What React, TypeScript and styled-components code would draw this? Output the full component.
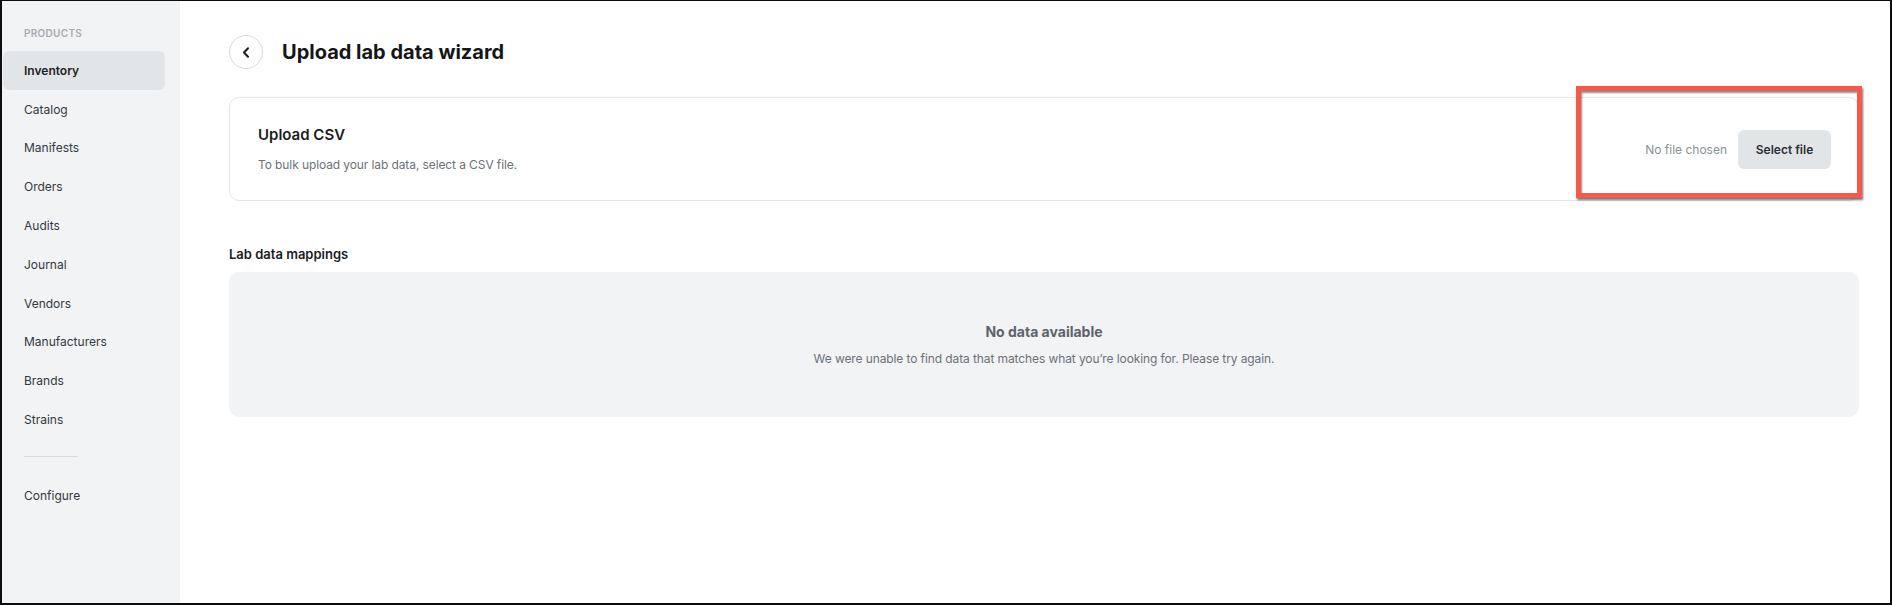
import React from "react";
import styled, { createGlobalStyle } from "styled-components";

const GlobalStyle = createGlobalStyle`
  * { box-sizing: border-box; }
  html, body { margin: 0; padding: 0; background: #ffffff; }
  body {
    font-family: Inter, "Noto Sans", "Liberation Sans", sans-serif;
    -webkit-font-smoothing: antialiased;
  }
`;

const Frame = styled.div`
  position: relative;
  display: flex;
  width: 1892px;
  height: 605px;
  border-style: solid;
  border-color: #0c0c0c;
  border-width: 1px 2px 2px 2px;
  overflow: hidden;
  background: #ffffff;
`;

const Sidebar = styled.nav`
  width: 178px;
  flex-shrink: 0;
  background: #f2f3f5;
  padding-top: 25px;
  display: flex;
  flex-direction: column;
`;

const SectionLabel = styled.div`
  font-size: 10px;
  line-height: 14px;
  font-weight: 600;
  letter-spacing: 0.3px;
  color: #a7abaf;
  text-transform: uppercase;
  padding-left: 22px;
  margin-bottom: 11px;
`;

const NavItem = styled.div<{ $active?: boolean }>`
  margin-left: 1px;
  width: 162px;
  height: 38.8px;
  flex-shrink: 0;
  display: flex;
  align-items: center;
  padding-left: 21px;
  border-radius: 6px;
  font-size: 12px;
  font-weight: ${(p) => (p.$active ? 600 : 400)};
  color: ${(p) => (p.$active ? "#1e2226" : "#34383c")};
  background: ${(p) => (p.$active ? "#e2e5e7" : "transparent")};
`;

const Divider = styled.div`
  width: 54px;
  height: 1px;
  background: #d9dcdf;
  margin: 17px 0 19px 22px;
`;

const Main = styled.main`
  flex: 1;
  min-width: 0;
  padding: 34px 31px 0 49px;
  display: flex;
  flex-direction: column;
`;

const Header = styled.div`
  display: flex;
  align-items: center;
  gap: 19px;
  height: 34px;
`;

const BackButton = styled.button`
  width: 34px;
  height: 34px;
  border-radius: 50%;
  border: 1px solid #d7d9db;
  background: #ffffff;
  display: flex;
  align-items: center;
  justify-content: center;
  padding: 0;
  cursor: pointer;
`;

const Title = styled.h1`
  margin: 0;
  font-size: 20px;
  line-height: 28px;
  font-weight: 700;
  color: #141618;
`;

const Card = styled.section`
  margin-top: 28px;
  height: 104px;
  border: 1px solid #e3e5e7;
  border-radius: 10px;
  padding: 0 27px 0 28px;
  display: flex;
  align-items: center;
  justify-content: space-between;
`;

const CardText = styled.div`
  display: flex;
  flex-direction: column;
  gap: 12px;
`;

const CardTitle = styled.div`
  font-size: 15px;
  line-height: 20px;
  font-weight: 600;
  color: #1a1c1e;
`;

const CardDesc = styled.div`
  font-size: 12px;
  line-height: 16px;
  letter-spacing: -0.1px;
  color: #6d7277;
`;

const FilePicker = styled.div`
  display: flex;
  align-items: center;
  gap: 11px;
`;

const FileStatus = styled.span`
  font-size: 12px;
  color: #8a9095;
`;

const SelectButton = styled.button`
  width: 93px;
  height: 39px;
  border: none;
  border-radius: 6px;
  background: #e2e5e7;
  font-family: inherit;
  font-size: 12px;
  font-weight: 600;
  color: #2b2f33;
  cursor: pointer;
`;

const SectionTitle = styled.h2`
  margin: 45px 0 10px 0;
  font-size: 13px;
  line-height: 16px;
  font-weight: 600;
  color: #1a1c1e;
`;

const EmptyBox = styled.div`
  height: 145px;
  border-radius: 10px;
  background: #f2f3f5;
  display: flex;
  flex-direction: column;
  align-items: center;
  justify-content: center;
  gap: 9px;
`;

const EmptyTitle = styled.div`
  font-size: 14px;
  line-height: 20px;
  font-weight: 700;
  color: #5d6369;
`;

const EmptyDesc = styled.div`
  font-size: 12px;
  line-height: 16px;
  letter-spacing: -0.1px;
  color: #6d7277;
`;

const Highlight = styled.div`
  position: absolute;
  left: 1574px;
  top: 85px;
  width: 286px;
  height: 112px;
  border: 5px solid #f4594a;
  box-shadow: 1px 2px 2px rgba(0, 0, 0, 0.55), inset 1px 2px 2px rgba(0, 0, 0, 0.45);
  pointer-events: none;
`;

const navItems = [
  "Inventory",
  "Catalog",
  "Manifests",
  "Orders",
  "Audits",
  "Journal",
  "Vendors",
  "Manufacturers",
  "Brands",
  "Strains",
];

export default function App() {
  return (
    <>
      <GlobalStyle />
      <Frame>
        <Sidebar>
          <SectionLabel>Products</SectionLabel>
          {navItems.map((item) => (
            <NavItem key={item} $active={item === "Inventory"}>
              {item}
            </NavItem>
          ))}
          <Divider />
          <NavItem>Configure</NavItem>
        </Sidebar>
        <Main>
          <Header>
            <BackButton aria-label="Back">
              <svg width="8" height="11" viewBox="0 0 8 11" fill="none">
                <path
                  d="M6 1.2L2 5.5L6 9.8"
                  stroke="#1b1d1f"
                  strokeWidth="2"
                  strokeLinecap="round"
                  strokeLinejoin="round"
                />
              </svg>
            </BackButton>
            <Title>Upload lab data wizard</Title>
          </Header>
          <Card>
            <CardText>
              <CardTitle>Upload CSV</CardTitle>
              <CardDesc>To bulk upload your lab data, select a CSV file.</CardDesc>
            </CardText>
            <FilePicker>
              <FileStatus>No file chosen</FileStatus>
              <SelectButton>Select file</SelectButton>
            </FilePicker>
          </Card>
          <SectionTitle>Lab data mappings</SectionTitle>
          <EmptyBox>
            <EmptyTitle>No data available</EmptyTitle>
            <EmptyDesc>
              We were unable to find data that matches what you’re looking for. Please try again.
            </EmptyDesc>
          </EmptyBox>
        </Main>
        <Highlight />
      </Frame>
    </>
  );
}
